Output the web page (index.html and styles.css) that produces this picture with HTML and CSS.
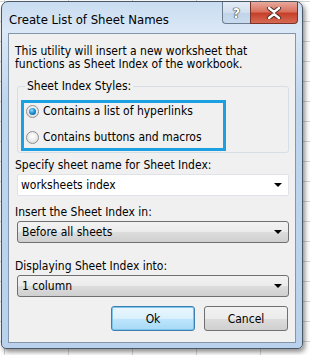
FILE: index.html
```html
<!DOCTYPE html>
<html lang="en">

<head>
    <meta charset="UTF-8">
    <title>Create List of Sheet Names</title>
    <link rel="stylesheet" href="styles.css">
</head>

<body>
    <div class="window">
        <div class="titlebar">
            <span class="title">Create List of Sheet Names</span>
            <div class="caption-buttons">
                <div class="cap-btn help">?</div>
                <div class="cap-btn close">
                    <svg width="16" height="12" viewBox="0 0 16 12">
                        <path d="M3 1 L8 5 L13 1 M3 11 L8 7 L13 11" fill="none" stroke="#4a2a24" stroke-width="4.2" stroke-linecap="round"/>
                        <path d="M3 1 L8 5 L13 1 M3 11 L8 7 L13 11" fill="none" stroke="#ffffff" stroke-width="2.4" stroke-linecap="round"/>
                    </svg>
                </div>
            </div>
        </div>

        <div class="panel">
            <p class="intro">This utility will insert a new worksheet that<br>functions as Sheet Index of the workbook.</p>

            <fieldset class="group">
                <legend>Sheet Index Styles:</legend>
                <div class="highlight">
                    <label class="radio-row"><span class="radio checked"></span>Contains a list of hyperlinks</label>
                    <label class="radio-row"><span class="radio"></span>Contains buttons and macros</label>
                </div>
            </fieldset>

            <div class="field-label first">Specify sheet name for Sheet Index:</div>
            <div class="combo edit">
                <span>worksheets index</span>
                <span class="arrow"></span>
            </div>

            <div class="field-label second">Insert the Sheet Index in:</div>
            <div class="combo">
                <span>Before all sheets</span>
                <span class="arrow"></span>
            </div>

            <div class="field-label third">Displaying Sheet Index into:</div>
            <div class="combo">
                <span>1 column</span>
                <span class="arrow"></span>
            </div>

            <div class="buttons">
                <button class="btn default">Ok</button>
                <button class="btn">Cancel</button>
            </div>
        </div>
    </div>
</body>

</html>
```

FILE: styles.css
```css
body {
    margin: 0;
    width: 310px;
    height: 355px;
    overflow: hidden;
    background-color: #ffffff;
    background-image:
        linear-gradient(to right, #d4d4d4 1px, transparent 1px),
        linear-gradient(to bottom, #d4d4d4 1px, transparent 1px);
    background-size: 64px 20px;
    background-position: 4px 1px;
    font-family: "DejaVu Sans Condensed", "DejaVu Sans", sans-serif;
    font-size: 12px;
    color: #000;
}

.window {
    box-sizing: border-box;
    width: 302px;
    height: 348px;
    margin: 1px 0 0 1px;
    padding: 0 6px 6px 6px;
    border: 1px solid #4b5866;
    border-radius: 7px 7px 5px 5px;
    background: linear-gradient(to bottom, #c9dcf1 0, #dbe8f6 30px, #bfd6ef 100px, #b9d1ec 100%);
    box-shadow: 2px 3px 5px rgba(0, 0, 0, 0.45);
}

.titlebar {
    height: 31px;
    display: flex;
    justify-content: space-between;
    align-items: flex-start;
}

.title {
    margin: 10px 0 0 1px;
    font-size: 13px;
    color: #000;
}

.caption-buttons {
    display: flex;
    margin-right: -2px;
}

.cap-btn {
    height: 21px;
    border: 1px solid #6b7d8f;
    border-top: none;
    display: flex;
    align-items: center;
    justify-content: center;
}

.help {
    width: 27px;
    border-radius: 0 0 0 4px;
    background: linear-gradient(to bottom, #e3ecf6 0, #d1dfee 50%, #c0d3e8 51%, #c9dbee 100%);
    color: #fff;
    font-weight: bold;
    font-size: 14px;
    text-shadow: 0 0 1px #333, 0 0 1px #333, 0 0 1px #333;
    border-right: none;
}

.close {
    width: 46px;
    border-radius: 0 0 4px 0;
    border-color: #7a3328;
    background: linear-gradient(to bottom, #e7a99e 0, #d9735f 45%, #c6402b 55%, #d66a52 100%);
}

.panel {
    box-sizing: border-box;
    height: 310px;
    padding: 0 6px 0 6px;
    border: 1px solid #8496aa;
    background-color: #f0f0f0;
}

.intro {
    margin: 11px 0 0 0;
    line-height: 13px;
}

.group {
    margin: 9px 0 0 2px;
    padding: 7px 0 1px 3px;
    border: 1px solid #d5dfe5;
    border-radius: 3px;
}

.group legend {
    padding: 0 2px;
    margin-left: 4px;
    line-height: 13px;
}

.highlight {
    width: 199px;
    padding: 2px 0 4px 0;
    border: 3px solid #1ba1e2;
    display: flex;
    flex-direction: column;
    gap: 13px;
}

.radio-row {
    display: flex;
    align-items: center;
    height: 13px;
    line-height: 13px;
}

.radio {
    box-sizing: border-box;
    width: 13px;
    height: 13px;
    margin: 0 4px 0 2px;
    border-radius: 50%;
    border: 1px solid #8e8f8f;
    background: radial-gradient(circle at 50% 40%, #ffffff 0, #e8e8e8 60%, #cfcfcf 100%);
    position: relative;
}

.radio.checked::after {
    content: "";
    position: absolute;
    left: 2px;
    top: 2px;
    width: 7px;
    height: 7px;
    border-radius: 50%;
    background: radial-gradient(circle at 40% 35%, #8fdcff 0, #1b8bd0 50%, #0b4f86 100%);
}

.field-label {
    line-height: 13px;
}

.field-label.first {
    margin-top: 6px;
}

.field-label.second {
    margin-top: 10px;
}

.field-label.third {
    margin-top: 17px;
}

.combo {
    box-sizing: border-box;
    height: 22px;
    margin: 2px 0 0 2px;
    padding: 0 6px 0 4px;
    border: 1px solid #707070;
    border-radius: 3px;
    background: linear-gradient(to bottom, #f2f2f2 0, #ebebeb 50%, #dddddd 51%, #cfcfcf 100%);
    display: flex;
    align-items: center;
    justify-content: space-between;
    font-size: 12px;
}

.combo.edit {
    background: #ffffff;
    border-color: #dfe3e8;
    border-radius: 2px;
    padding-left: 3px;
}

.arrow {
    width: 0;
    height: 0;
    border-left: 4px solid transparent;
    border-right: 4px solid transparent;
    border-top: 4px solid #000;
}

.buttons {
    margin-top: 9px;
    display: flex;
    justify-content: flex-end;
    gap: 9px;
    padding-right: 1px;
}

.btn {
    box-sizing: border-box;
    width: 84px;
    height: 25px;
    font-family: inherit;
    font-size: 12px;
    color: #000;
    border: 1px solid #707070;
    border-radius: 3px;
    background: linear-gradient(to bottom, #f2f2f2 0, #ebebeb 50%, #dddddd 51%, #cfcfcf 100%);
    padding: 0;
}

.btn.default {
    border-color: #3c7fb1;
    background: linear-gradient(to bottom, #eaf6fd 0, #d9f0fc 50%, #bee6fd 51%, #a7d9f5 100%);
    box-shadow: inset 0 0 0 1px #7fc4ea;
}
```
